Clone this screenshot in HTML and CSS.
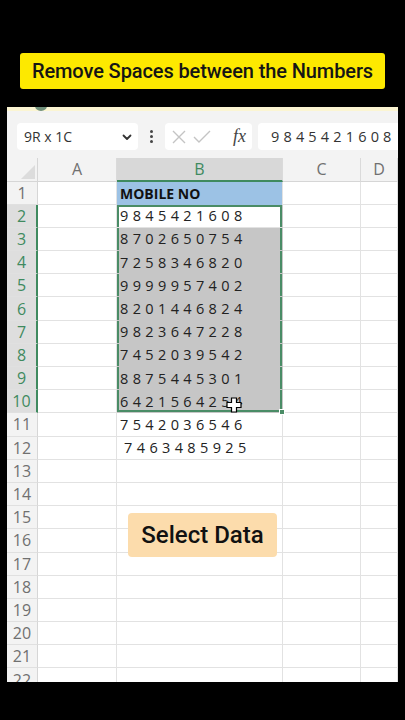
FILE: index.html
```html
<!DOCTYPE html>
<html>
<head>
<meta charset="utf-8">
<link rel="stylesheet" href="styles.css">
</head>
<body>
<div class="banner-wrap"><div class="banner">Remove Spaces between the Numbers</div></div>
<div class="panel">
  <div class="strip"><span class="dot"></span></div>
  <div class="fbar">
    <div class="namebox"><span>9R x 1C</span>
      <svg class="chev" width="10" height="7" viewBox="0 0 10 7"><path d="M1.5 1.5 L5 5 L8.5 1.5" fill="none" stroke="#333" stroke-width="1.8" stroke-linecap="round" stroke-linejoin="round"/></svg>
    </div>
    <div class="vdots"><i></i><i></i><i></i></div>
    <div class="fnbox">
      <svg width="18" height="18" viewBox="0 0 18 18"><path d="M3 3 L15 15 M15 3 L3 15" stroke="#c4c4c4" stroke-width="1.4" fill="none"/></svg>
      <svg width="20" height="18" viewBox="0 0 20 18"><path d="M2 9 L7 14 L18 3" stroke="#c4c4c4" stroke-width="1.4" fill="none"/></svg>
      <span class="fx">fx</span>
    </div>
    <div class="formula">9 8 4 5 4 2 1 6 0 8</div>
  </div>
  <div class="grid">
    <div class="corner"><svg width="14" height="14" viewBox="0 0 14 14"><path d="M14 0 L14 14 L0 14 Z" fill="#dcdcdc"/></svg></div>
    <div class="ch">A</div><div class="ch sel">B</div><div class="ch">C</div><div class="ch">D</div>

    <div class="rh">1</div><div class="c"></div><div class="c hdr">MOBILE NO</div><div class="c"></div><div class="c"></div>
    <div class="rh sel">2</div><div class="c"></div><div class="c b active top">9 8 4 5 4 2 1 6 0 8</div><div class="c"></div><div class="c"></div>
    <div class="rh sel">3</div><div class="c"></div><div class="c b">8 7 0 2 6 5 0 7 5 4</div><div class="c"></div><div class="c"></div>
    <div class="rh sel">4</div><div class="c"></div><div class="c b">7 2 5 8 3 4 6 8 2 0</div><div class="c"></div><div class="c"></div>
    <div class="rh sel">5</div><div class="c"></div><div class="c b">9 9 9 9 9 5 7 4 0 2</div><div class="c"></div><div class="c"></div>
    <div class="rh sel">6</div><div class="c"></div><div class="c b">8 2 0 1 4 4 6 8 2 4</div><div class="c"></div><div class="c"></div>
    <div class="rh sel">7</div><div class="c"></div><div class="c b">9 8 2 3 6 4 7 2 2 8</div><div class="c"></div><div class="c"></div>
    <div class="rh sel">8</div><div class="c"></div><div class="c b">7 4 5 2 0 3 9 5 4 2</div><div class="c"></div><div class="c"></div>
    <div class="rh sel">9</div><div class="c"></div><div class="c b">8 8 7 5 4 4 5 3 0 1</div><div class="c"></div><div class="c"></div>
    <div class="rh sel">10</div><div class="c"></div><div class="c b bottom">6 4 2 1 5 6 4 2 5 4
      <span class="handle"></span>
      <svg class="cursor" width="16" height="16" viewBox="0 0 16 16"><path d="M5.5 1 H10.5 V5.5 H15 V10.5 H10.5 V15 H5.5 V10.5 H1 V5.5 H5.5 Z" fill="#fff" stroke="#000" stroke-width="1.2"/></svg>
    </div><div class="c"></div><div class="c"></div>
    <div class="rh">11</div><div class="c"></div><div class="c num">7 5 4 2 0 3 6 5 4 6</div><div class="c"></div><div class="c"></div>
    <div class="rh">12</div><div class="c"></div><div class="c num">&nbsp;7 4 6 3 4 8 5 9 2 5</div><div class="c"></div><div class="c"></div>
    <div class="rh">13</div><div class="c"></div><div class="c"></div><div class="c"></div><div class="c"></div>
    <div class="rh">14</div><div class="c"></div><div class="c"></div><div class="c"></div><div class="c"></div>
    <div class="rh">15</div><div class="c"></div><div class="c"></div><div class="c"></div><div class="c"></div>
    <div class="rh">16</div><div class="c"></div><div class="c"></div><div class="c"></div><div class="c"></div>
    <div class="rh">17</div><div class="c"></div><div class="c"></div><div class="c"></div><div class="c"></div>
    <div class="rh">18</div><div class="c"></div><div class="c"></div><div class="c"></div><div class="c"></div>
    <div class="rh">19</div><div class="c"></div><div class="c"></div><div class="c"></div><div class="c"></div>
    <div class="rh">20</div><div class="c"></div><div class="c"></div><div class="c"></div><div class="c"></div>
    <div class="rh">21</div><div class="c"></div><div class="c"></div><div class="c"></div><div class="c"></div>
    <div class="rh">22</div><div class="c"></div><div class="c"></div><div class="c"></div><div class="c"></div>
  </div>
  <div class="label">Select Data</div>
</div>
</body>
</html>
```
FILE: styles.css
```css
* { box-sizing: border-box; }
body {
  margin: 0;
  width: 405px;
  height: 720px;
  overflow: hidden;
  background: #000;
  font-family: "Open Sans", "Liberation Sans", sans-serif;
}
.banner-wrap { padding: 53px 20px 0 20px; }
.banner {
  height: 36px;
  background: #fde900;
  border-radius: 3px;
  display: flex;
  align-items: center;
  justify-content: center;
  font-family: Roboto, "Noto Sans", sans-serif;
  font-weight: 500;
  font-size: 20px;
  letter-spacing: -0.1px;
  color: #151515;
}
.panel {
  position: relative;
  margin: 18px 0 0 7px;
  width: 391px;
  height: 575px;
  background: #fff;
  overflow: hidden;
}
.strip {
  height: 4px;
  background: #fbf5d2;
  position: relative;
}
.dot {
  position: absolute;
  left: 28px;
  top: -6px;
  width: 12px;
  height: 10px;
  border-radius: 50%;
  background: #6f8f7a;
}
.fbar {
  height: 47px;
  background: #f3f3f3;
  display: flex;
  align-items: flex-start;
  padding: 12px 0 0 10px;
}
.namebox {
  width: 121px;
  height: 27px;
  background: #fff;
  border-radius: 4px;
  display: flex;
  align-items: center;
  justify-content: space-between;
  padding: 0 6px 0 7px;
  font-size: 14px;
  color: #333;
}
.chev { margin-top: 2px; }
.vdots {
  width: 27px;
  height: 27px;
  display: flex;
  flex-direction: column;
  align-items: center;
  justify-content: center;
  gap: 2px;
}
.vdots i { width: 3px; height: 3px; background: #444; border-radius: 50%; display: block; }
.fnbox {
  width: 87px;
  height: 27px;
  background: #fff;
  border-radius: 4px;
  display: flex;
  align-items: center;
  padding: 0 6px 0 5px;
  gap: 4px;
}
.fx {
  margin-left: auto;
  font-family: "Liberation Serif", serif;
  font-style: italic;
  font-size: 18px;
  color: #444;
}
.formula {
  margin-left: 6px;
  flex: 1;
  height: 27px;
  background: #fff;
  border-radius: 4px 0 0 4px;
  display: flex;
  align-items: center;
  padding-left: 13px;
  font-size: 14.5px;
  letter-spacing: 0.2px;
  color: #333;
  white-space: nowrap;
  overflow: hidden;
}
.grid {
  display: grid;
  grid-template-columns: 31px 79px 166px 78px 37px;
  grid-template-rows: 23.5px;
  grid-auto-rows: 23.2px;
}
.corner {
  background: #f3f3f3;
  border-right: 1px solid #d6d6d6;
  border-bottom: 1px solid #d6d6d6;
  display: flex;
  align-items: flex-end;
  justify-content: flex-end;
  padding: 0 2px 2px 0;
}
.ch {
  background: #f3f3f3;
  border-right: 1px solid #dadada;
  border-bottom: 1px solid #d6d6d6;
  display: flex;
  align-items: center;
  justify-content: center;
  font-size: 16px;
  color: #707070;
}
.ch.sel {
  background: #d8d8d8;
  color: #3f8a5f;
  border-bottom: 2px solid #3f8a5f;
}
.rh {
  background: #f3f3f3;
  border-right: 1px solid #d6d6d6;
  border-bottom: 1px solid #e0e0e0;
  display: flex;
  align-items: center;
  justify-content: center;
  font-size: 16px;
  color: #707070;
}
.rh.sel {
  background: #dedede;
  color: #3f8a5f;
  border-right: 2px solid #3f8a5f;
}
.c {
  border-right: 1px solid #e2e2e2;
  border-bottom: 1px solid #e2e2e2;
  display: flex;
  align-items: center;
  padding-left: 3px;
  font-size: 14.5px;
  color: #222;
  white-space: nowrap;
  position: relative;
}
.c.hdr {
  background: #9cc2e5;
  font-weight: 700;
  font-size: 14px;
  color: #111;
  border-bottom: none;
}
.num { letter-spacing: 0.3px; }
.c.b {
  letter-spacing: 0.3px;
  background: #c6c6c6;
  border-bottom-color: #c6c6c6;
  border-right-color: #c6c6c6;
  box-shadow: inset 2px 0 0 #4a8c66, inset -2px 0 0 #4a8c66;
}
.c.b.active { background: #fff; border-bottom-color: #e2e2e2; }
.c.b.top { box-shadow: inset 2px 0 0 #4a8c66, inset -2px 0 0 #4a8c66, inset 0 2px 0 #4a8c66; }
.c.b.bottom { box-shadow: inset 2px 0 0 #4a8c66, inset -2px 0 0 #4a8c66, inset 0 -2px 0 #4a8c66; }
.handle {
  position: absolute;
  right: -3px;
  bottom: -3px;
  width: 6px;
  height: 6px;
  background: #4a8c66;
  border: 1px solid #fff;
  z-index: 2;
}
.cursor {
  position: absolute;
  left: 109px;
  top: 7px;
  z-index: 3;
}
.label {
  position: absolute;
  left: 121px;
  top: 406px;
  width: 149px;
  height: 44px;
  background: #fcdcac;
  border-radius: 4px;
  display: flex;
  align-items: center;
  justify-content: center;
  font-family: Roboto, "Noto Sans", sans-serif;
  font-weight: 500;
  font-size: 24px;
  color: #111;
}
```
